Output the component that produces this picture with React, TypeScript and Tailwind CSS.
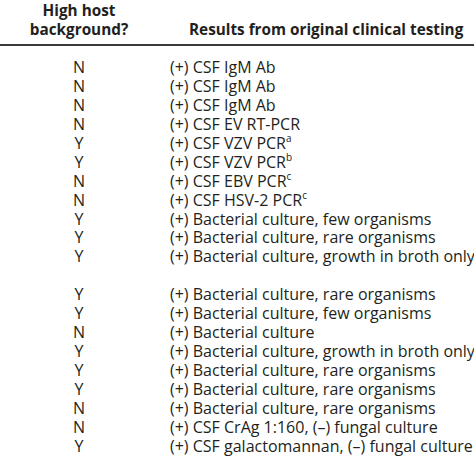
import React from "react";

const Sup = ({ c }: { c: string }) => (
  <span className="relative -top-[7px] text-[10px] leading-none">{c}</span>
);

const rows: [string, React.ReactNode][] = [
  ["N", "(+) CSF IgM Ab"],
  ["N", "(+) CSF IgM Ab"],
  ["N", "(+) CSF IgM Ab"],
  ["N", "(+) CSF EV RT-PCR"],
  ["Y", <>(+) CSF VZV PCR<Sup c="a" /></>],
  ["Y", <>(+) CSF VZV PCR<Sup c="b" /></>],
  ["N", <>(+) CSF EBV PCR<Sup c="c" /></>],
  ["N", <>(+) CSF HSV-2 PCR<Sup c="c" /></>],
  ["Y", "(+) Bacterial culture, few organisms"],
  ["Y", "(+) Bacterial culture, rare organisms"],
  ["Y", "(+) Bacterial culture, growth in broth only"],
  ["", ""],
  ["Y", "(+) Bacterial culture, rare organisms"],
  ["Y", "(+) Bacterial culture, few organisms"],
  ["N", "(+) Bacterial culture"],
  ["Y", "(+) Bacterial culture, growth in broth only"],
  ["Y", "(+) Bacterial culture, rare organisms"],
  ["Y", "(+) Bacterial culture, rare organisms"],
  ["N", "(+) Bacterial culture, rare organisms"],
  ["N", "(+) CSF CrAg 1:160, (\u2013) fungal culture"],
  ["Y", "(+) CSF galactomannan, (\u2013) fungal culture"],
];

export default function App() {
  return (
    <div
      className="w-[474px] h-[474px] bg-white overflow-hidden text-[#231f20] text-[16px]"
      style={{ fontFamily: '"Open Sans", sans-serif' }}
    >
      <div className="flex items-end h-[44px] font-bold text-[15.3px] leading-[19px] pb-[5px] whitespace-nowrap">
        <div className="w-[158px] shrink-0 text-center">
          High host
          <br />
          background?
        </div>
        <div className="ml-[31px] shrink-0">Results from original clinical testing</div>
      </div>
      <div className="h-[2px] bg-[#3a3a3a]" />
      <div className="pt-[12px]">
        {rows.map(([yn, txt], i) => (
          <div key={i} className="flex h-[18.95px] leading-[19px] whitespace-nowrap">
            <div className="w-[158px] shrink-0 text-center">{yn}</div>
            <div className="ml-[12px] shrink-0">{txt}</div>
          </div>
        ))}
      </div>
    </div>
  );
}
